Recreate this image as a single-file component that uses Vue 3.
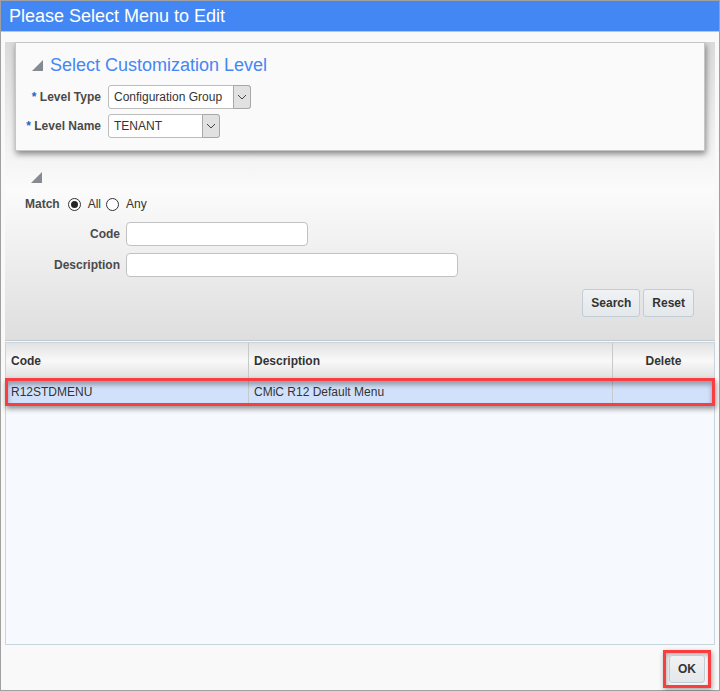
<script setup>
import { ref } from 'vue'

const levelType = ref('Configuration Group')
const levelName = ref('TENANT')
const match = ref('all')
const code = ref('')
const description = ref('')
const rows = [{ code: 'R12STDMENU', description: 'CMiC R12 Default Menu' }]
</script>

<template>
  <main class="dialog">
    <h1 class="title">Please Select Menu to Edit</h1>

    <div class="content">
      <section class="criteria">
        <div class="card">
          <h2 class="card-title">
            <svg class="disclosure" viewBox="0 0 11 11" aria-hidden="true"><path d="M11 0V11H0Z" /></svg>
            Select Customization Level
          </h2>
          <div class="level-row">
            <label for="level-type"><span class="required">*</span> Level Type</label>
            <span class="select select-type">
              <select id="level-type" v-model="levelType"><option>Configuration Group</option></select>
              <span class="arrow"><svg viewBox="0 0 10 6" aria-hidden="true"><path d="M1 1L5 5L9 1" /></svg></span>
            </span>
          </div>
          <div class="level-row">
            <label for="level-name"><span class="required">*</span> Level Name</label>
            <span class="select select-name">
              <select id="level-name" v-model="levelName"><option>TENANT</option></select>
              <span class="arrow"><svg viewBox="0 0 10 6" aria-hidden="true"><path d="M1 1L5 5L9 1" /></svg></span>
            </span>
          </div>
        </div>

        <form class="search" @submit.prevent>
          <svg class="disclosure" viewBox="0 0 11 11" aria-hidden="true"><path d="M11 0V11H0Z" /></svg>
          <div class="match" role="radiogroup" aria-labelledby="match-label">
            <span id="match-label" class="match-label">Match</span>
            <label><input v-model="match" type="radio" name="match" value="all" />All</label>
            <label><input v-model="match" type="radio" name="match" value="any" />Any</label>
          </div>
          <div class="field">
            <label for="code">Code</label>
            <input id="code" v-model="code" class="short" type="text" />
          </div>
          <div class="field">
            <label for="description">Description</label>
            <input id="description" v-model="description" class="long" type="text" />
          </div>
          <div class="actions">
            <button type="submit">Search</button>
            <button type="reset">Reset</button>
          </div>
        </form>
      </section>

      <section class="results">
        <table>
          <colgroup><col class="col-code" /><col /><col class="col-delete" /></colgroup>
          <thead>
            <tr><th>Code</th><th>Description</th><th class="center">Delete</th></tr>
          </thead>
          <tbody>
            <tr v-for="row in rows" :key="row.code">
              <td>{{ row.code }}</td>
              <td>{{ row.description }}</td>
              <td></td>
            </tr>
          </tbody>
        </table>
      </section>
    </div>

    <footer class="footer">
      <span class="highlight"><button type="button">OK</button></span>
    </footer>
  </main>
</template>

<style>
body {
  background: #f9f9f9;
}
</style>

<style scoped>
* {
  box-sizing: border-box;
}

.dialog {
  display: flex;
  flex-direction: column;
  min-height: 100vh;
  border: 1px solid #a0a0a0;
  background: #f9f9f9;
  color: #333;
  font: 12px/16px "Liberation Sans", Arial, sans-serif;
}

.title {
  margin: 0;
  padding: 0 8px;
  border-bottom: 1px solid #a9c8f5;
  background: #4387f4;
  color: #fff;
  font-size: 18px;
  font-weight: 400;
  line-height: 30px;
}

.content {
  display: flex;
  flex: 1;
  flex-direction: column;
  padding: 10px 4px 0;
}

.criteria {
  overflow: hidden;
  border-bottom: 1px solid #c4c8cc;
  background: linear-gradient(#dadada 0, #f0f0f0 32%, #fbfbfb 50%, #dedede 100%);
}

.card {
  margin: 0 10px;
  padding: 10px 0;
  border: 1px solid #c6c6c6;
  background: #fafafa;
  box-shadow: 1px 3px 6px rgba(0, 0, 0, 0.45);
}

.card-title {
  display: flex;
  align-items: center;
  gap: 7px;
  margin: 0 0 5px;
  padding-left: 16px;
  color: #4387f4;
  font-size: 18px;
  font-weight: 400;
  line-height: 24px;
}

.disclosure {
  display: block;
  width: 11px;
  height: 11px;
  fill: #858b90;
}

.level-row {
  display: flex;
  align-items: center;
  gap: 7px;
  height: 29px;
}

.level-row label {
  width: 85px;
  color: #4a4a4a;
  font-weight: 700;
  text-align: right;
}

.required {
  color: #2464c6;
}

.select {
  position: relative;
  height: 24px;
}

.select-type {
  width: 143px;
}

.select-name {
  width: 112px;
}

select {
  width: 100%;
  height: 100%;
  padding: 0 18px 0 5px;
  border: 1px solid #bcbcbc;
  border-radius: 3px;
  appearance: none;
  background: #fff;
  color: #333;
  font: inherit;
}

.arrow {
  position: absolute;
  top: 0;
  right: 0;
  display: grid;
  place-items: center;
  width: 18px;
  height: 100%;
  border: 1px solid #a8a8a8;
  border-radius: 0 3px 3px 0;
  background: #e1e1e1;
  pointer-events: none;
}

.arrow svg {
  width: 10px;
  height: 6px;
  fill: none;
  stroke: #444;
}

.search {
  padding: 21px 21px 23px 20px;
}

.search > .disclosure {
  margin: 0 0 7px 6px;
}

.match {
  display: flex;
  align-items: center;
  gap: 5px;
  height: 28px;
}

.match-label {
  margin-right: 3px;
  color: #4a4a4a;
  font-weight: 700;
}

.match label {
  display: flex;
  align-items: center;
  gap: 7px;
}

.match input {
  display: grid;
  place-items: center;
  width: 13px;
  height: 13px;
  margin: 0;
  border: 1px solid #333;
  border-radius: 50%;
  appearance: none;
  background: #fff;
}

.match input:checked::before {
  width: 7px;
  height: 7px;
  border-radius: 50%;
  background: #262626;
  content: "";
}

.field {
  display: flex;
  align-items: center;
  gap: 6px;
  height: 31px;
}

.field label {
  width: 95px;
  color: #4a4a4a;
  font-weight: 700;
  text-align: right;
}

.field input {
  height: 24px;
  padding: 0 5px;
  border: 1px solid #c2c2c2;
  border-radius: 4px;
  background: #fff;
  font: inherit;
}

.short {
  width: 182px;
}

.long {
  width: 332px;
}

.actions {
  display: flex;
  justify-content: flex-end;
  gap: 3px;
  margin-top: 9px;
}

button {
  height: 28px;
  padding: 0 8px;
  border: 1px solid #c2ccd4;
  border-radius: 3px;
  background: linear-gradient(#f0f2f4, #e4e8eb);
  color: #333;
  font: inherit;
  font-weight: 700;
}

.results {
  flex: 1;
  margin-top: 1px;
  border: 1px solid #c9d5de;
  background: #f6f9fe;
}

table {
  width: 100%;
  border-spacing: 0;
  table-layout: fixed;
}

.col-code {
  width: 243px;
}

.col-delete {
  width: 101px;
}

th,
td {
  padding: 0 5px;
  border-right: 1px solid #c6cacd;
  text-align: left;
}

th:last-child,
td:last-child {
  border-right: 0;
}

th {
  height: 36px;
}

thead tr {
  background: linear-gradient(#e2e2e2, #f9f9f9 50%, #dfdfdf);
}

th.center {
  text-align: center;
}

td {
  height: 26px;
}

tbody tr {
  position: relative;
  background: #d2e1fb;
}

td:first-child::after {
  position: absolute;
  inset: -1px;
  border: 3px solid #f93e42;
  box-shadow: 1px 3px 5px rgba(0, 0, 0, 0.4), inset 0 4px 5px rgba(0, 0, 0, 0.3);
  content: "";
  pointer-events: none;
}

.footer {
  display: flex;
  justify-content: flex-end;
  padding: 5px 8px 2px;
}

.highlight {
  display: flex;
  padding: 2px 3px;
  border: 3px solid #f93e42;
  box-shadow: 1px 2px 5px rgba(0, 0, 0, 0.35), inset 1px 2px 4px rgba(0, 0, 0, 0.3);
}
</style>
